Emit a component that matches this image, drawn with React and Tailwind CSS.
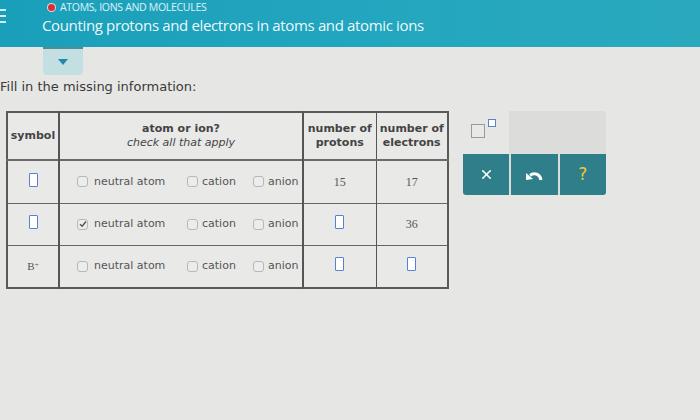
import { X } from "lucide-react";

const FONT = { fontFamily: '"DejaVu Sans", Verdana, sans-serif' };
const SERIF = { fontFamily: '"Liberation Serif", serif' };

function BlueBox({ className = "" }) {
  return <span className={`inline-block w-[9px] h-[14px] border-[1.5px] border-[#5a7fd8] rounded-[1px] bg-white ${className}`} />;
}

function Check({ checked }) {
  return (
    <span className="inline-flex items-center justify-center w-[11px] h-[11px] rounded-[3px] border border-[#b8b8b8] bg-[#ececec]">
      {checked && (
        <svg width="8" height="8" viewBox="0 0 8 8">
          <path d="M1 4.2 L3.2 6.3 L7 1.5" fill="none" stroke="#555" strokeWidth="1.4" />
        </svg>
      )}
    </span>
  );
}

function Options({ checked }) {
  return (
    <div className="flex items-center pl-[17px] text-[11px] text-[#555]">
      <label className="flex items-center gap-[6px] w-[110px]">
        <Check checked={checked} /> neutral atom
      </label>
      <label className="flex items-center gap-[4px] w-[66px]">
        <Check /> cation
      </label>
      <label className="flex items-center gap-[4px]">
        <Check /> anion
      </label>
    </div>
  );
}

export default function App() {
  return (
    <div className="w-[700px] h-[420px] overflow-hidden bg-[#e6e6e4]" style={FONT}>
      {/* Header */}
      <div className="h-[47px] bg-gradient-to-r from-[#1a9fba] via-[#22a6bf] to-[#2aa9bd] flex">
        <div className="w-[42px] pt-[9px] flex flex-col gap-[4px]">
          <span className="block w-[6px] h-[2px] bg-white/80" />
          <span className="block w-[6px] h-[2px] bg-white/80" />
          <span className="block w-[6px] h-[2px] bg-white/80" />
        </div>
        <div className="pt-[1px]" style={{ fontFamily: '"Open Sans", sans-serif' }}>
          <div className="flex items-center gap-[4px] pl-[5px] h-[12px] text-[10.5px] leading-[12px] tracking-[-0.3px] text-white/85">
            <span className="w-[9px] h-[9px] rounded-full bg-[#d3303a] border border-white/80" />
            ATOMS, IONS AND MOLECULES
          </div>
          <div className="mt-[2px] text-[15px] leading-[20px] tracking-[-0.35px] text-white/95">
            Counting protons and electrons in atoms and atomic ions
          </div>
        </div>
      </div>

      {/* Tab */}
      <div className="ml-[43px] w-[40px] h-[28px] rounded-b-[4px] bg-[#c3dfe2] border-t-2 border-[#4e8d96] flex items-center justify-center">
        <svg width="10" height="6" viewBox="0 0 10 6">
          <path d="M0 0 H10 L5 6 Z" fill="#1d8ab0" />
        </svg>
      </div>

      <div className="mt-[4px] text-[13px] leading-[16px] text-[#3a3a3a]">Fill in the missing information:</div>

      <div className="mt-[16px] flex items-start">
        <table className="ml-[6px] border-collapse border-2 border-[#5a5a5a] text-[#444] bg-[#e9e9e8]">
          <tbody>
            <tr className="h-[48px] border-b-2 border-[#6a6a6a]">
              <th className="w-[52px] border-r-2 border-[#555] text-[11px] font-bold">symbol</th>
              <th className="w-[244px] border-r-2 border-[#555] text-[11px] leading-[14px]">
                <div className="font-bold">atom or ion?</div>
                <div className="italic font-normal">check all that apply</div>
              </th>
              <th className="w-[73px] border-r border-[#555] text-[11px] font-bold leading-[14px]">
                number of<br />protons
              </th>
              <th className="w-[72px] text-[11px] font-bold leading-[14px]">
                number of<br />electrons
              </th>
            </tr>
            <tr className="h-[43px] border-b border-[#666]">
              <td className="border-r-2 border-[#555] text-center"><BlueBox /></td>
              <td className="border-r-2 border-[#555]"><Options /></td>
              <td className="border-r border-[#555] text-center text-[12px] text-[#555]" style={SERIF}>15</td>
              <td className="text-center text-[12px] text-[#555]" style={SERIF}>17</td>
            </tr>
            <tr className="h-[42px] border-b border-[#666]">
              <td className="border-r-2 border-[#555] text-center"><BlueBox /></td>
              <td className="border-r-2 border-[#555]"><Options checked /></td>
              <td className="border-r border-[#555] text-center"><BlueBox /></td>
              <td className="text-center text-[12px] text-[#555]" style={SERIF}>36</td>
            </tr>
            <tr className="h-[43px]">
              <td className="border-r-2 border-[#555] text-center text-[11px] text-[#555]" style={SERIF}>
                B<sup className="text-[7px]">+</sup>
              </td>
              <td className="border-r-2 border-[#555]"><Options /></td>
              <td className="border-r border-[#555] text-center"><BlueBox /></td>
              <td className="text-center"><BlueBox /></td>
            </tr>
          </tbody>
        </table>

        {/* Side panel */}
        <div className="ml-[14px] w-[143px] rounded-[3px] overflow-hidden">
          <div className="h-[43px] flex bg-[#dcdcdb]">
            <div className="w-[46px] bg-[#e6e6e5] flex items-start pl-[8px] pt-[8px]">
              <span className="mt-[5px] w-[14px] h-[14px] border border-[#9a9a9a] bg-[#e8e8e8]" />
              <span className="ml-[3px] w-[8px] h-[8px] border-[1.5px] border-[#5a7fd8] bg-white" />
            </div>
          </div>
          <div className="h-[41px] flex gap-[2px] bg-[#dcdcdb]">
            <div className="flex-1 bg-[#2e7f8a] flex items-center justify-center">
              <X size={15} color="#fff" strokeWidth={2.5} />
            </div>
            <div className="flex-1 bg-[#2e7f8a] flex items-center justify-center">
              <svg width="18" height="12" viewBox="0 0 18 12">
                <path d="M16 11 C15 5, 9 3, 5 6.5" fill="none" stroke="#fff" strokeWidth="3" />
                <path d="M1 4 L8 10 L1 11 Z" fill="#fff" />
              </svg>
            </div>
            <div className="flex-1 bg-[#2e7f8a] flex items-center justify-center text-[17px] text-[#f3c436]">
              ?
            </div>
          </div>
        </div>
      </div>
    </div>
  );
}
